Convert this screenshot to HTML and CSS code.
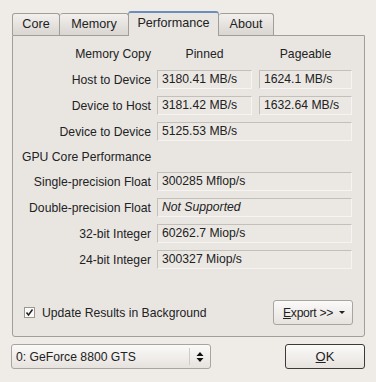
FILE: index.html
```html
<!DOCTYPE html>
<html lang="en">
<head>
    <meta charset="UTF-8">
    <title>CUDA-Z</title>
    <link rel="stylesheet" href="styles.css">
</head>
<body>
    <div class="dialog">
        <div class="tabs">
            <div class="tab first">Core</div>
            <div class="tab">Memory</div>
            <div class="tab active">Performance</div>
            <div class="tab">About</div>
        </div>

        <div class="panel">
            <div class="grid">
                <div class="label">Memory Copy</div>
                <div class="head">Pinned</div>
                <div class="head">Pageable</div>

                <div class="label">Host to Device</div>
                <div class="field">3180.41 MB/s</div>
                <div class="field">1624.1 MB/s</div>

                <div class="label">Device to Host</div>
                <div class="field">3181.42 MB/s</div>
                <div class="field">1632.64 MB/s</div>

                <div class="label">Device to Device</div>
                <div class="field wide">5125.53 MB/s</div>

                <div class="section">GPU Core Performance</div>

                <div class="label">Single-precision Float</div>
                <div class="field wide">300285 Mflop/s</div>

                <div class="label">Double-precision Float</div>
                <div class="field wide"><em>Not Supported</em></div>

                <div class="label">32-bit Integer</div>
                <div class="field wide">60262.7 Miop/s</div>

                <div class="label">24-bit Integer</div>
                <div class="field wide">300327 Miop/s</div>
            </div>

            <div class="panel-foot">
                <label class="check">
                    <span class="box">
                        <svg width="9" height="9" viewBox="0 0 9 9">
                            <path d="M1.5 4.5 L3.5 7 L7.5 1.5" fill="none" stroke="#222" stroke-width="1.5"/>
                        </svg>
                    </span>
                    Update Results in Background
                </label>
                <button class="btn export"><span class="export-text"><u>E</u>xport &gt;&gt;</span><span class="caret"></span></button>
            </div>
        </div>

        <div class="bottom">
            <div class="combo">
                <span class="combo-text">0: GeForce 8800 GTS</span>
                <span class="combo-arrows">
                    <svg width="8" height="12" viewBox="0 0 8 12">
                        <path d="M4 1 L7.5 5 L0.5 5 Z M0.5 7 L7.5 7 L4 11 Z" fill="#111"/>
                    </svg>
                </span>
            </div>
            <button class="btn ok"><u>O</u>K</button>
        </div>
    </div>
</body>
</html>
```

FILE: styles.css
```css
body {
    margin: 0;
    background: #efece8;
    font-family: "Liberation Sans", Arial, sans-serif;
    font-size: 12.2px;
    color: #222;
}

.dialog {
    width: 376px;
    height: 382px;
    padding: 11px 11px 0 12px;
    box-sizing: border-box;
}

/* tab strip */
.tabs {
    display: flex;
    align-items: flex-end;
    height: 24px;
    position: relative;
    z-index: 1;
}

.tab {
    height: 22px;
    box-sizing: border-box;
    line-height: 21px;
    border: 1px solid #a19d99;
    border-bottom: none;
    border-left: none;
    border-radius: 3px 3px 0 0;
    background: linear-gradient(#f2f0ed, #d9d5d1);
    text-align: center;
    font-size: 12.6px;
}

.tab.first {
    border-left: 1px solid #a19d99;
    width: 48px;
}

.tab:nth-child(2) {
    width: 69px;
}

.tab.active {
    width: 91px;
    height: 25px;
    margin-bottom: -1px;
    margin-left: -1px;
    line-height: 21px;
    background: #e9e6e2;
    border: 1px solid #a19d99;
    border-top: 2px solid #6a8fbd;
    border-bottom: none;
}

.tab:nth-child(4) {
    width: 55px;
}

/* panel */
.panel {
    height: 302px;
    box-sizing: border-box;
    border: 1px solid #a19d99;
    border-radius: 0 0 3px 3px;
    background: #e9e6e2;
    padding: 8px 11px 11px 9px;
    display: flex;
    flex-direction: column;
}

.grid {
    display: grid;
    grid-template-columns: 129px 95px 94px;
    grid-template-rows: repeat(4, 19px) 17px repeat(4, 19px);
    column-gap: 6px;
    row-gap: 7px;
    align-items: center;
}

.grid > :nth-child(3) {
    margin-left: 1px;
}

.label {
    text-align: right;
    white-space: nowrap;
}

.head {
    text-align: center;
}

.section {
    grid-column: 1 / 4;
}

.field {
    height: 19px;
    box-sizing: border-box;
    line-height: 17px;
    padding: 0 4px;
    background: #ebe8e4;
    border: 1px solid #c3bfbb;
    border-right-color: #f6f4f2;
    border-bottom-color: #f6f4f2;
    white-space: nowrap;
}

.field + .field {
    margin-left: 1px;
}

.field.wide {
    grid-column: 2 / 4;
}

.field em {
    font-style: italic;
}

.panel-foot {
    margin-top: auto;
    display: flex;
    justify-content: space-between;
    align-items: center;
    padding-left: 2px;
}

.check {
    display: flex;
    align-items: center;
    gap: 7px;
}

.box {
    width: 11px;
    height: 11px;
    box-sizing: border-box;
    border: 1px solid #9a9692;
    background: #fbfaf9;
    display: flex;
    align-items: center;
    justify-content: center;
}

.btn {
    font-family: inherit;
    font-size: 12.2px;
    color: #222;
    border-radius: 3px;
    background: linear-gradient(#fbfaf9, #e6e2de);
    padding: 0;
    white-space: nowrap;
}

.export {
    width: 80px;
    height: 25px;
    box-sizing: border-box;
    border: 1px solid #a8a4a0;
    display: flex;
    align-items: center;
    justify-content: space-between;
    padding: 0 7px 0 9px;
}

.export-text {
    letter-spacing: -0.3px;
}

.caret {
    width: 0;
    height: 0;
    border-left: 3px solid transparent;
    border-right: 3px solid transparent;
    border-top: 3px solid #222;
}

/* bottom row */
.bottom {
    display: flex;
    justify-content: space-between;
    margin-top: 7px;
    margin-left: -1px;
}

.combo {
    width: 200px;
    height: 25px;
    box-sizing: border-box;
    border: 1px solid #a8a4a0;
    border-radius: 3px;
    background: linear-gradient(#fbfaf9, #e6e2de);
    display: flex;
    align-items: center;
}

.combo-text {
    flex: 1;
    padding-left: 4px;
}

.combo-arrows {
    width: 20px;
    height: 17px;
    border-left: 1px solid #cfcbc7;
    display: flex;
    align-items: center;
    justify-content: center;
}

.ok {
    width: 80px;
    height: 25px;
    border: 1px solid #3c3a38;
    font-size: 13px;
}
```
